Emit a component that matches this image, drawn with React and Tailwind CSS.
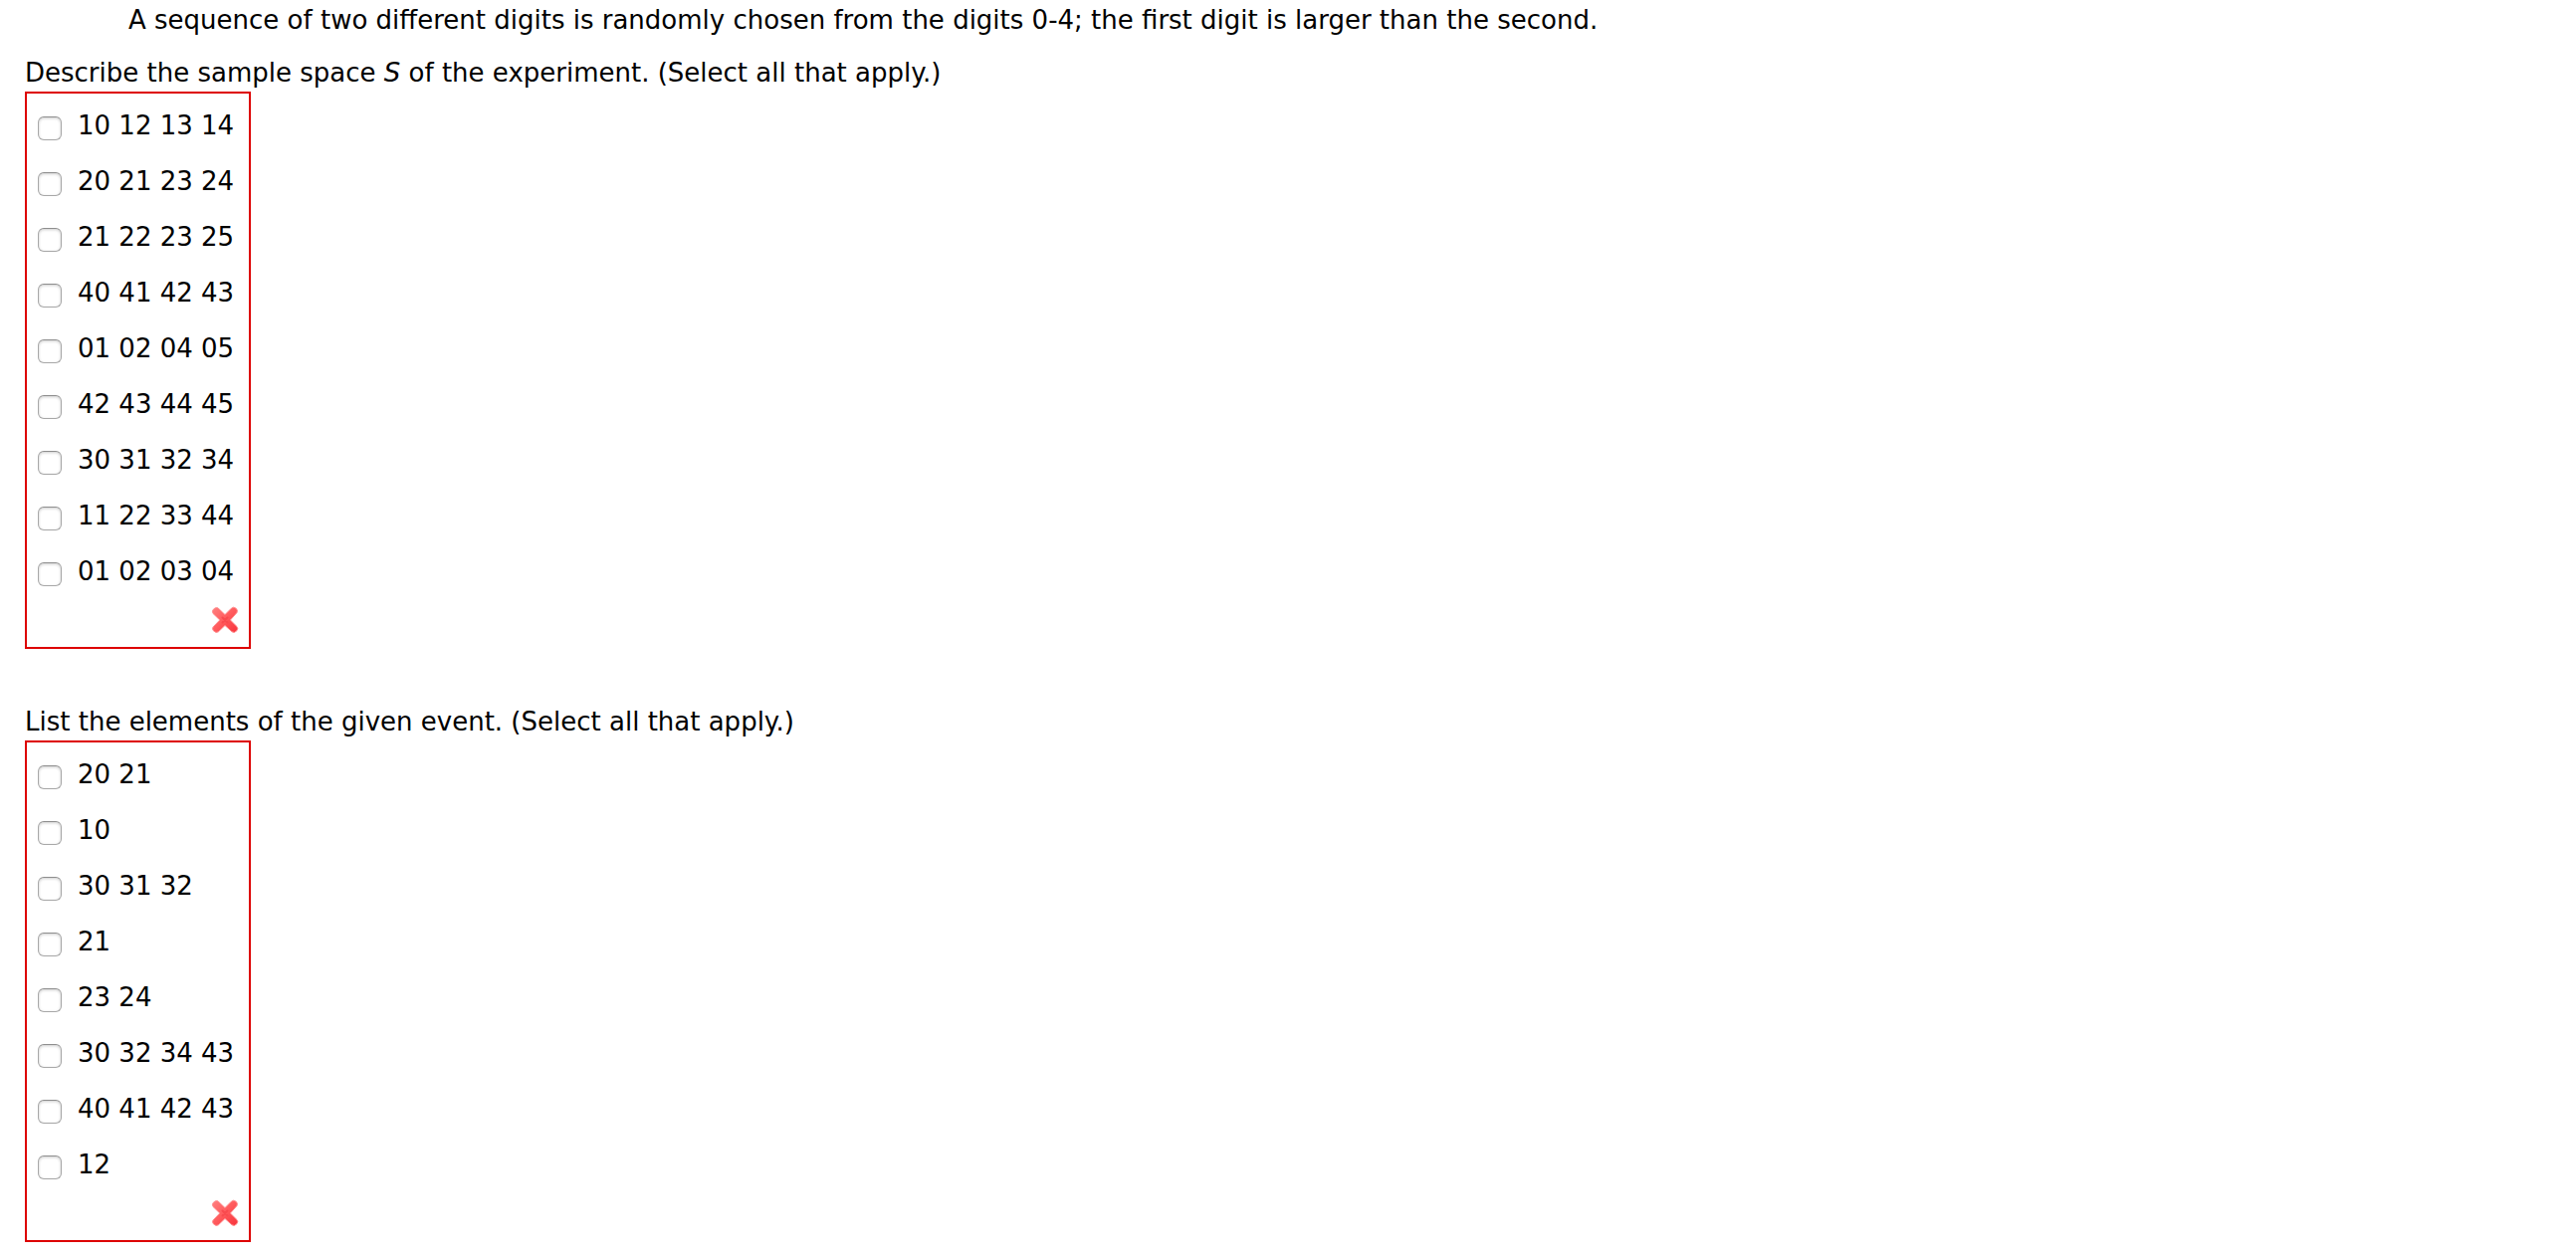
import React from 'react';

const sampleSpaceOptions = [
  '10 12 13 14',
  '20 21 23 24',
  '21 22 23 25',
  '40 41 42 43',
  '01 02 04 05',
  '42 43 44 45',
  '30 31 32 34',
  '11 22 33 44',
  '01 02 03 04',
];

const eventOptions = [
  '20 21',
  '10',
  '30 31 32',
  '21',
  '23 24',
  '30 32 34 43',
  '40 41 42 43',
  '12',
];

// Red cross shown under a wrong answer
const WrongMark = () => (
  <svg className="h-7 w-7" viewBox="0 0 28 28" role="img" aria-label="Incorrect">
    <defs>
      <linearGradient id="wrong" x1="0" y1="0" x2="1" y2="1">
        <stop offset="0" stopColor="#ff8080" />
        <stop offset="0.5" stopColor="#ff5a5c" />
        <stop offset="1" stopColor="#f8323a" />
      </linearGradient>
    </defs>
    <path
      d="M5.6 1.6 Q7 1.6 8 2.8 L14 8.6 L20.4 2.2 Q22.6 0.2 24.8 2 Q27.4 4 26 6.6 L19.4 14 L26 20.6 Q27.6 22.6 26 24.6 Q23.4 27.6 21 25.8 L14 19.4 L7.4 25.8 Q5 27.4 2.6 25 Q0.6 22.6 2.2 20.8 L8.8 14 L2 7.4 Q0.6 5 2.4 3.2 Q4 1.6 5.6 1.6 Z"
      fill="url(#wrong)"
      stroke="#ff8f90"
      strokeWidth="1"
      strokeLinejoin="round"
    />
    <path d="M11.5 11.5 L16.5 16.5 M16.5 11.5 L11.5 16.5" stroke="#f94a4e" strokeWidth="2" strokeLinecap="round" />
  </svg>
);

const AnswerBox = ({ name, options }) => (
  <div className="w-fit min-w-[227px] border-2 border-[#dd0000] pt-1 pl-[11px] pr-[10px]">
    {options.map((option) => (
      <label key={option} className="flex h-14 items-center gap-4 whitespace-nowrap">
        <input
          type="checkbox"
          name={name}
          value={option}
          className="mt-1.5 h-6 w-6 shrink-0 appearance-none rounded-md border border-[#a8a8a8] border-t-[#8e8e8e] bg-white shadow-[inset_0_1px_3px_rgba(0,0,0,0.2)] checked:bg-blue-500"
        />
        {option}
      </label>
    ))}
    <div className="flex h-12 items-start justify-end pt-[7px]">
      <WrongMark />
    </div>
  </div>
);

const Question = ({ name, prompt, options }) => (
  <fieldset>
    <legend className="leading-[38px]">{prompt}</legend>
    <AnswerBox name={name} options={options} />
  </fieldset>
);

const App = () => {
  return (
    <main className="min-h-screen bg-white pl-[25px] font-['Verdana','DejaVu_Sans',sans-serif] text-[26px] text-black">
      <p className="mb-[14px] pl-[104px] leading-[40px]">
        A sequence of two different digits is randomly chosen from the digits 0-4; the first digit is larger than the second.
      </p>
      <div className="flex flex-col gap-[54px]">
        <Question
          name="sample-space"
          prompt={<>Describe the sample space <i>S</i> of the experiment. (Select all that apply.)</>}
          options={sampleSpaceOptions}
        />
        <Question
          name="event"
          prompt="List the elements of the given event. (Select all that apply.)"
          options={eventOptions}
        />
      </div>
    </main>
  );
};

export default App;
